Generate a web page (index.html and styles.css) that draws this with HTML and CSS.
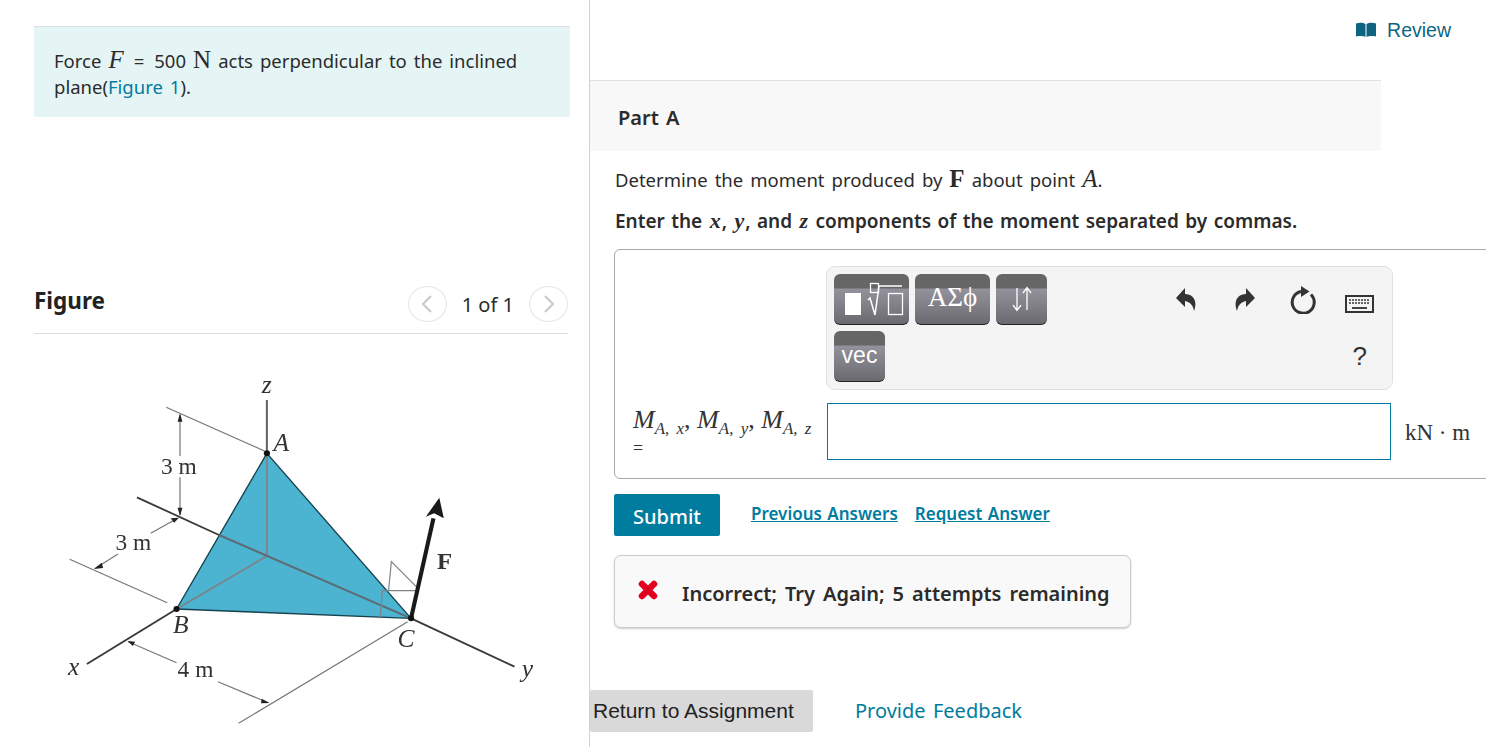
FILE: index.html
```html
<!DOCTYPE html>
<html lang="en">
<head>
<meta charset="utf-8">
<title>Part A</title>
<link rel="stylesheet" href="styles.css">
</head>
<body>
<div class="page">
  <aside class="left">
    <div class="intro">
      <p>Force <i class="m big">F</i> <span class="eq">=</span> 500 <span class="m-r">N</span> acts perpendicular to the inclined plane(<a href="#">Figure 1</a>).</p>
    </div>
    <div class="figure-head">
      <h2>Figure</h2>
      <div class="pager">
        <span class="round"><svg width="12" height="20" viewBox="0 0 12 20"><path d="M10 2 2 10l8 8" fill="none" stroke="#c8c8c8" stroke-width="2"/></svg></span>
        <span class="count">1 of 1</span>
        <span class="round"><svg width="12" height="20" viewBox="0 0 12 20"><path d="M2 2l8 8-8 8" fill="none" stroke="#c8c8c8" stroke-width="2"/></svg></span>
      </div>
    </div>
    <svg class="diagram" width="540" height="377" viewBox="0 0 1566 1131" preserveAspectRatio="none">
      <path d="M687 90V250" stroke="#666" stroke-width="6"/>
      <path d="M687 250 425 717 1105 745Z" fill="#4cb3d0" stroke="#17424f" stroke-width="4" stroke-linejoin="round"/>
      <g fill="none" stroke="#7d8488" stroke-width="5.500">
        <path d="M687 250V558"/>
        <path d="M687 558 425 717"/>
      </g>
      <path d="M548 495 1105 745" fill="none" stroke="#5d6c74" stroke-width="6"/>
      <g fill="none" stroke="#3a3a3a" stroke-width="5.500">
        <path d="M310 382 548 495"/>
        <path d="M1105 745 1405 890"/>
        <path d="M425 717 165 882"/>
      </g>
      <g fill="none" stroke="#777" stroke-width="3.500">
        <path d="M395 112 680 243"/>
        <path d="M115 568 398 698"/>
        <path d="M435 135V258M435 322V435"/>
        <path d="M190 595 255 552M350 490 428 445"/>
        <path d="M285 815 425 878M545 935 690 998"/>
        <path d="M605 1060 1095 755"/>
      </g>
      <g fill="none" stroke="#7d858a" stroke-width="3.500">
        <path d="M1015 745 1022 662H1120"/>
        <path d="M1040 660 1048 575 1120 650"/>
      </g>
      <g fill="#222">
        <path d="M435 130 428 155H442Z"/>
        <path d="M435 438 428 413H442Z"/>
        <path d="M432 443 408 445 418 458Z"/>
        <path d="M185 597 208 578 212 594Z"/>
        <path d="M283 813 305 815 298 828Z"/>
        <path d="M695 999 672 986 670 1000Z"/>
      </g>
      <path d="M1105 745 1170 445" fill="none" stroke="#1a1a1a" stroke-width="12"/>
      <path d="M1187 383 1200 445 1172 430 1148 440Z" fill="#1a1a1a"/>
      <circle cx="687" cy="250" r="9" fill="#111"/>
      <circle cx="425" cy="717" r="9" fill="#111"/>
      <circle cx="1105" cy="745" r="9" fill="#111"/>
      <g class="dl">
        <text x="672" y="68" class="it">z</text>
        <text x="706" y="243" class="it">A</text>
        <text x="380" y="312">3 m</text>
        <text x="248" y="540">3 m</text>
        <text x="415" y="790" class="it">B</text>
        <text x="1066" y="830" class="it">C</text>
        <text x="110" y="915" class="it">x</text>
        <text x="428" y="922">4 m</text>
        <text x="1426" y="922" class="it">y</text>
        <text x="1180" y="597" class="bd">F</text>
      </g>
    </svg>
  </aside>
  <main class="right">
    <div class="review-bar">
      <a class="review" href="#">
        <svg width="20" height="16" viewBox="0 0 20 16"><path d="M0 1.500C3 .5 7 .5 9.500 2V15C7 13.800 3 13.800 0 14.500ZM10.500 2C13 .5 17 .5 20 1.500V14.500C17 13.800 13 13.800 10.500 15Z" fill="#0e6480"/></svg>
        Review
      </a>
    </div>
    <div class="part-head">Part A</div>
    <div class="content">
      <p class="q">Determine the moment produced by <b class="m-b">F</b> about point <i class="m big">A</i>.</p>
      <p class="inst">Enter the <i class="m">x</i>, <i class="m">y</i>, and <i class="m">z</i> components of the moment separated by commas.</p>
      <div class="answer">
        <div class="tool-row">
          <div class="toolbar">
            <div class="tools-line">
              <div class="btn w75">
                <svg width="75" height="51" viewBox="0 0 75 51"><rect x="11" y="19" width="16" height="22" fill="#fff"/><path d="M34 26l2-2 5 17 4-29h23" fill="none" stroke="#fff" stroke-width="1.500"/><rect x="36.500" y="9.500" width="8" height="9" fill="none" stroke="#fff" stroke-width="1.300"/><rect x="54.500" y="19.500" width="14" height="21" fill="none" stroke="#fff" stroke-width="1.300"/></svg>
              </div>
              <div class="btn w75 greek">ΑΣϕ</div>
              <div class="btn w51">
                <svg width="22" height="28" viewBox="0 0 22 28"><path d="M6 3V25M2 20 6 25.500 10 20M16 25V3M12 8 16 2.500 20 8" fill="none" stroke="#fff" stroke-width="1.300"/></svg>
              </div>
              <div class="spring"></div>
              <svg class="act undo" width="21" height="23" viewBox="0 0 21 23"><path d="M0 10 9 0V6C17 6 22 13 18 23 17 17 14 14 9 13V19Z" fill="#333"/></svg>
              <svg class="act redo" width="21" height="23" viewBox="0 0 21 23"><path d="M21 10 12 0V6C4 6-1 13 3 23 4 17 7 14 12 13V19Z" fill="#333"/></svg>
              <svg class="act reload" width="26" height="28" viewBox="0 0 26 28"><path d="M21 8.500A11 11 0 1 1 11 5.500" fill="none" stroke="#333" stroke-width="3"/><path d="M11 0 19.500 5.500 11 11Z" fill="#333"/></svg>
              <svg class="kbd" width="29" height="18" viewBox="0 0 29 18"><rect x="1" y="1" width="27" height="16" fill="none" stroke="#333" stroke-width="2"/><path d="M4 5h21M4 8h21" stroke="#666" stroke-width="2" stroke-dasharray="2 1"/><path d="M7 13h15" stroke="#444" stroke-width="2"/></svg>
            </div>
            <div class="tools-line second">
              <div class="btn w51 vec">vec</div>
              <div class="spring"></div>
              <span class="help">?</span>
            </div>
          </div>
        </div>
        <div class="entry">
          <div class="label"><i>M</i><sub><i>A</i>, <i>x</i></sub>, <i>M</i><sub><i>A</i>, <i>y</i></sub>, <i>M</i><sub><i>A</i>, <i>z</i></sub><br><span class="lab-eq">=</span></div>
          <div class="field"></div>
          <div class="unit">kN · m</div>
        </div>
      </div>
      <div class="actions">
        <button class="submit" type="button">Submit</button>
        <a class="link" href="#">Previous Answers</a>
        <a class="link" href="#">Request Answer</a>
      </div>
      <div class="feedback">
        <svg width="22" height="20" viewBox="0 0 22 20"><path d="M5 4 17 16M17 4 5 16" stroke="#e2001f" stroke-width="6.500" stroke-linecap="round"/></svg>
        <span>Incorrect; Try Again; 5 attempts remaining</span>
      </div>
    </div>
    <div class="footer">
      <button class="return" type="button">Return to Assignment</button>
      <a class="provide" href="#">Provide Feedback</a>
    </div>
  </main>
</div>
</body>
</html>
```
FILE: styles.css
```css
* { box-sizing: border-box; }
html, body { margin: 0; padding: 0; height: 747px; overflow: hidden; background: #fff; }
body { font-family: "Noto Sans", "Open Sans", sans-serif; font-size: 18.500px; word-spacing: 2.200px; color: #2b2b2b; }
p, h2 { margin: 0; }
a { color: #007c9e; text-decoration: none; }
.page { display: grid; grid-template-columns: 590px 896px; height: 747px; overflow: hidden; }
.left { border-right: 1px solid #c8d4e2; padding: 26px 0 0 34px; height: 747px; overflow: hidden; }
.intro { width: 536px; height: 91px; background: #e5f5f6; border-top: 1px solid #d9e2e6; padding: 20px 20px 0; line-height: 26px; }
.m { font-family: "Liberation Serif", serif; font-style: italic; font-size: 22px; line-height: 1; }
.big { font-size: 25px; }
.m-r { font-family: "Liberation Serif", serif; font-size: 25px; line-height: 1; }
.m-b { font-family: "Liberation Serif", serif; font-weight: bold; font-size: 25px; line-height: 1; }
.eq { margin: 0 3px; }
.figure-head { display: flex; justify-content: space-between; align-items: center; width: 534px; height: 50px; margin-top: 167px; border-bottom: 1px solid #ddd; }
.figure-head h2 { font-size: 22.500px; font-weight: 700; color: #222; margin-top: -16px; word-spacing: 0; }
.pager { display: flex; align-items: center; gap: 15px; margin-top: -10px; }
.round { width: 39px; height: 36px; border: 1px solid #e5e5e5; border-radius: 50%; display: flex; align-items: center; justify-content: center; }
.count { font-size: 20px; word-spacing: 0; margin-top: 2px; }
.diagram { display: block; margin: 36px 0 0 -4px; filter: blur(.4px); }
.dl text { font-family: "Liberation Serif", serif; font-size: 68px; fill: #333; word-spacing: 0; }
.dl .it { font-style: italic; font-size: 74px; }
.dl .bd { font-weight: bold; font-size: 72px; }
.right { min-width: 0; overflow: hidden; }
.review-bar { height: 80px; display: flex; justify-content: flex-end; padding: 17px 35px 0 0; }
.review { font-family: "Liberation Sans", sans-serif; font-size: 19.500px; word-spacing: 0; color: #0e6480; display: flex; align-items: center; gap: 11px; height: 26px; }
.part-head { width: 791px; height: 71px; background: #f8f8f8; border-top: 1px solid #e2e2e2; padding: 3px 0 0 28px; display: flex; align-items: center; font-weight: 600; font-size: 20px; word-spacing: 2px; }
.content { padding-left: 25px; width: 920px; }
.q { margin-top: 15px; line-height: 28px; }
.inst { margin-top: 13px; line-height: 28px; font-weight: 600; font-size: 19px; word-spacing: 1.500px; }
.inst .m { margin: 0 1px; }
.answer { margin-top: 14px; margin-left: -1px; border: 1px solid #aaa; border-radius: 6px; height: 230px; padding: 16px 0 0 12px; }
.tool-row { display: flex; padding-left: 199px; }
.toolbar { width: 567px; height: 124px; background: #f4f4f4; border: 1px solid #e0e0e0; border-radius: 9px; padding: 7px; }
.tools-line { display: flex; gap: 6px; align-items: flex-start; }
.tools-line.second { margin-top: 6px; }
.spring { flex: 1; }
.btn { height: 51px; border-radius: 6px; border-bottom: 1px solid #222; background: linear-gradient(#666 0 14px, #93919b 15px, #6c6a70 100%); color: #fff; display: flex; align-items: center; justify-content: center; word-spacing: 0; }
.w75 { width: 75px; }
.w51 { width: 51px; }
.greek { font-family: "Liberation Serif", "DejaVu Serif", serif; font-size: 27px; padding-bottom: 3px; }
.vec { font-family: "Liberation Sans", sans-serif; font-size: 23px; padding-bottom: 2px; }
.act { margin-top: 14px; flex: none; }
.redo { margin-left: 31px; }
.reload { margin: 12px 0 0 29px; }
.kbd { margin: 21px 11px 0 23px; flex: none; }
.help { font-family: "Liberation Sans", sans-serif; font-size: 26px; color: #333; margin: 10px 18px 0 0; }
.entry { display: flex; align-items: flex-start; margin-top: 13px; }
.label { width: 200px; padding: 2px 0 0 6px; font-family: "Liberation Serif", serif; font-size: 26px; word-spacing: 0; line-height: 30px; color: #333; white-space: nowrap; }
.label sub { font-size: 17px; line-height: 0; word-spacing: 3px; }
.lab-eq { font-size: 18px; display: block; margin-top: -2px; }
.field { width: 564px; height: 57px; border: 1px solid #007c9e; background: #fff; }
.unit { margin: 17px 0 0 14px; font-family: "Liberation Serif", serif; font-size: 23px; word-spacing: 0; color: #333; white-space: nowrap; }
.actions { display: flex; align-items: flex-start; margin-top: 15px; margin-left: -1px; }
.submit { width: 106px; height: 42px; background: #007c9e; color: #fff; border: 0; border-radius: 2px; font: 500 20px "Noto Sans", sans-serif; padding: 2px 0 0; }
.link { font-weight: 600; font-size: 17px; word-spacing: 1px; text-decoration: underline; color: #007c9e; margin: 8px 0 0 17px; }
.link:first-of-type { margin-left: 31px; }
.feedback { margin-top: 19px; margin-left: -1px; width: 517px; height: 73px; background: #f9f9f9; border: 1px solid #ccc; border-radius: 7px; box-shadow: 0 1px 2px rgba(0,0,0,.2); display: flex; align-items: center; gap: 23px; padding-left: 22px; font-weight: 600; font-size: 20px; word-spacing: 2.800px; }
.feedback svg { margin-top: -4px; }
.feedback span { margin-top: 4px; }
.footer { display: flex; align-items: center; margin-top: 62px; }
.return { width: 223px; height: 42px; background: #d9d9d9; border: 0; border-radius: 2px; font: 21px "Liberation Sans", sans-serif; word-spacing: 0; color: #222; text-align: left; padding: 0 0 0 3px; }
.provide { margin-left: 42px; font-size: 20px; word-spacing: 2.200px; color: #007c9e; margin-top: -2px; }
```
